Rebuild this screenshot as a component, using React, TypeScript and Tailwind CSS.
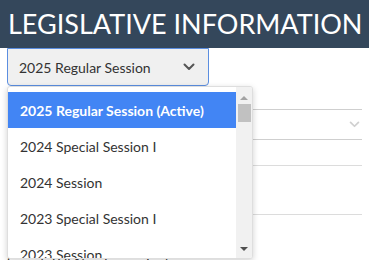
const sessions = [
  "2025 Regular Session (Active)",
  "2024 Special Session I",
  "2024 Session",
  "2023 Special Session I",
  "2023 Session",
  "2022 Special Session I",
];

function Chevron({ className }: { className?: string }) {
  return (
    <svg viewBox="0 0 12 8" className={className} fill="none">
      <path d="M1.5 1.5 6 6l4.5-4.5" stroke="currentColor" strokeWidth="2" strokeLinecap="round" strokeLinejoin="round" />
    </svg>
  );
}

export default function App() {
  return (
    <div className="relative h-[260px] w-[369px] overflow-hidden bg-white font-['Lato',sans-serif] text-[#333]">
      <header className="h-[48px] bg-[#34475b] pl-[8px] text-[27px] leading-[48px] text-white whitespace-nowrap">
        LEGISLATIVE INFORMATION
      </header>

      <div className="px-[7px]">
        <div className="flex h-[38px] w-[202px] items-center justify-between rounded-b-[4px] border border-[#5b8ee0] bg-[#f0f0f0] pl-[11px] pr-[13px] text-[14px]">
          <span>2025 Regular Session</span>
          <Chevron className="h-[8px] w-[12px] text-[#555]" />
        </div>

        <div className="mt-[23px] flex h-[31px] items-center justify-end border-y border-[#cfcfcf] pr-[2px]">
          <Chevron className="h-[7px] w-[11px] text-[#d0d0d0]" />
        </div>
        <div className="h-[26px] border-b border-[#dcdcdc]" />
        <div className="h-[49px] border-b border-[#dcdcdc]" />
        <div className="pt-[36px] text-[14px] text-[#333]">Search Bill Number or Text</div>
      </div>

      <div className="absolute left-[7px] top-[86px] flex h-[173px] w-[246px] overflow-hidden rounded-[3px] border border-[#dedede] bg-white shadow-[0_2px_6px_rgba(0,0,0,0.18)]">
        <ul className="flex-1 pt-[5px] text-[14px]">
          {sessions.map((s, i) => (
            <li
              key={s}
              className={
                i === 0
                  ? "flex h-[36px] items-center bg-[#4285f4] pl-[12px] font-bold text-white"
                  : "flex h-[36px] items-center pl-[12px] text-[#333]"
              }
            >
              {s}
            </li>
          ))}
        </ul>
        <div className="flex w-[16px] flex-col items-center bg-[#f1f1f1] pt-[9px]">
          <div className="h-0 w-0 border-x-[4px] border-b-[4px] border-x-transparent border-b-[#a3a3a3]" />
          <div className="mt-[4px] h-[18px] w-[13px] bg-[#c1c1c1]" />
          <div className="mt-auto mb-[7px] h-0 w-0 border-x-[4px] border-t-[4px] border-x-transparent border-t-[#505050]" />
        </div>
      </div>
    </div>
  );
}
